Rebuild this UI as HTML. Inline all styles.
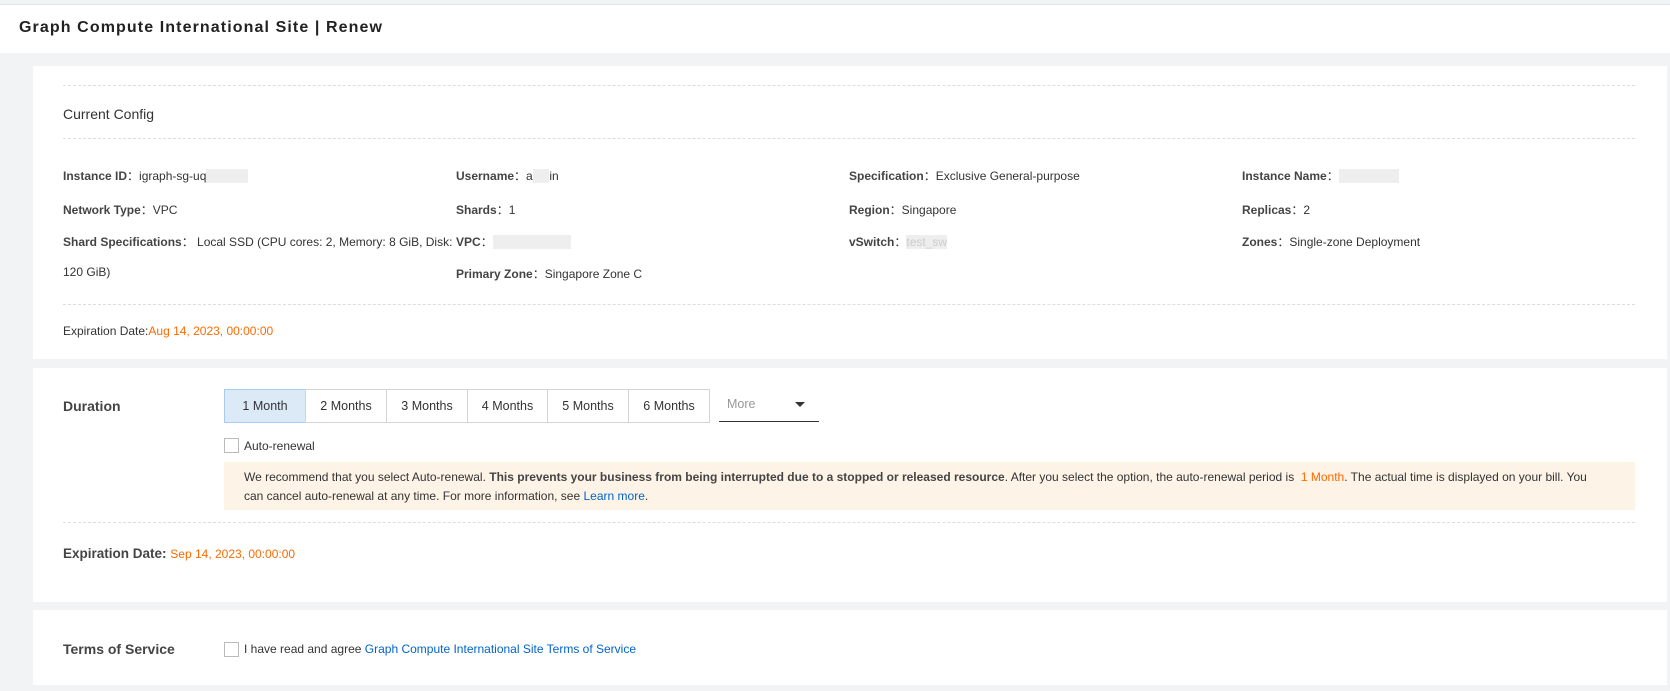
<!DOCTYPE html>
<html><head><meta charset="utf-8"><style>
*{box-sizing:border-box;margin:0;padding:0}
body{width:1670px;height:691px;background:#f2f3f5;font-family:"Liberation Sans",Arial,sans-serif;color:#333;position:relative;overflow:hidden;font-size:12px}
.abs{position:absolute;white-space:nowrap}
.hdr{position:absolute;left:0;top:4px;width:1670px;height:49px;background:#fff;border-top:1px solid #e5e5e5}
.card{position:absolute;left:33px;width:1634px;background:#fff}
.dash{position:absolute;left:63px;width:1572px;border-top:1px dashed #ddd}
b{font-weight:bold;color:#444}
.org{color:#ff6a00}
.blue{color:#0064c8}
.btn{position:absolute;top:389px;height:34px;border:1px solid #d5d5d5;background:#fff;text-align:center;line-height:32px;font-size:12.5px;color:#333}
.cb{position:absolute;width:15px;height:15px;border:1px solid #bbb;background:#fff}
</style></head><body>
<div class="hdr"><div class="abs" style="left:19px;top:14px;font-size:16px;font-weight:bold;letter-spacing:1.1px;color:#222">Graph Compute International Site | Renew</div></div>

<div class="card" style="top:66px;height:293px"></div>
<div class="dash" style="top:85px"></div>
<div class="abs" style="left:63px;top:106px;font-size:14px;color:#333">Current Config</div>
<div class="dash" style="top:138px"></div>

<div class="abs" style="left:63px;top:167px"><b>Instance ID</b>：igraph-sg-uq<span style="background:#eee;color:#eee">xxxxxxx</span></div>
<div class="abs" style="left:63px;top:201px"><b>Network Type</b>：VPC</div>
<div class="abs" style="left:63px;top:233px"><b>Shard Specifications</b>： Local SSD (CPU cores: 2, Memory: 8 GiB, Disk:</div>
<div class="abs" style="left:63px;top:265px">120 GiB)</div>

<div class="abs" style="left:456px;top:167px"><b>Username</b>：a<span style="background:#eee;color:#eee">dm</span>in</div>
<div class="abs" style="left:456px;top:201px"><b>Shards</b>：1</div>
<div class="abs" style="left:456px;top:233px"><b>VPC</b>：<span style="background:#eee;color:#eee">xxxxxxxxxxxxx</span></div>
<div class="abs" style="left:456px;top:265px"><b>Primary Zone</b>：Singapore Zone C</div>

<div class="abs" style="left:849px;top:167px"><b>Specification</b>：Exclusive General-purpose</div>
<div class="abs" style="left:849px;top:201px"><b>Region</b>：Singapore</div>
<div class="abs" style="left:849px;top:233px"><b>vSwitch</b>：<span style="background:#eee;color:#ccc">test_sw</span></div>

<div class="abs" style="left:1242px;top:167px"><b>Instance Name</b>：<span style="background:#eee;color:#eee">xxxxxxxxxx</span></div>
<div class="abs" style="left:1242px;top:201px"><b>Replicas</b>：2</div>
<div class="abs" style="left:1242px;top:233px"><b>Zones</b>：Single-zone Deployment</div>

<div class="dash" style="top:304px"></div>
<div class="abs" style="left:63px;top:324px">Expiration Date:<span class="org">Aug 14, 2023, 00:00:00</span></div>

<div class="card" style="top:368px;height:234px"></div>
<div class="abs" style="left:63px;top:398px;font-size:14px;font-weight:bold;color:#444">Duration</div>
<div class="btn" style="left:224px;width:82px;background:#dceaf8;border-color:#a9cbee">1 Month</div>
<div class="btn" style="left:305px;width:82px">2 Months</div>
<div class="btn" style="left:386px;width:82px">3 Months</div>
<div class="btn" style="left:467px;width:81px">4 Months</div>
<div class="btn" style="left:547px;width:82px">5 Months</div>
<div class="btn" style="left:628px;width:82px">6 Months</div>
<div class="abs" style="left:727px;top:397px;color:#999;font-size:12.5px">More</div>
<div class="abs" style="left:795px;top:402px;width:0;height:0;border-left:5px solid transparent;border-right:5px solid transparent;border-top:5px solid #333"></div>
<div class="abs" style="left:719px;top:421px;width:100px;border-top:1px solid #333"></div>
<div class="cb" style="left:224px;top:438px"></div>
<div class="abs" style="left:244px;top:439px">Auto-renewal</div>
<div class="abs" style="left:224px;top:462px;width:1411px;height:48px;background:#fef3e7"></div>
<div class="abs" style="left:244px;top:468px;line-height:19px">We recommend that you select Auto-renewal. <b>This prevents your business from being interrupted due to a stopped or released resource</b>. After you select the option, the auto-renewal period is &nbsp;<span class="org">1 Month</span>. The actual time is displayed on your bill. You<br>can cancel auto-renewal at any time. For more information, see <span class="blue">Learn more</span>.</div>
<div class="dash" style="top:522px"></div>
<div class="abs" style="left:63px;top:546px;font-size:13.5px"><b>Expiration Date:</b> <span class="org" style="font-size:12px">Sep 14, 2023, 00:00:00</span></div>

<div class="card" style="top:610px;height:75px"></div>
<div class="abs" style="left:63px;top:641px;font-size:14px;font-weight:bold;color:#444">Terms of Service</div>
<div class="cb" style="left:224px;top:642px"></div>
<div class="abs" style="left:244px;top:642px">I have read and agree <span class="blue">Graph Compute International Site Terms of Service</span></div>
</body></html>
